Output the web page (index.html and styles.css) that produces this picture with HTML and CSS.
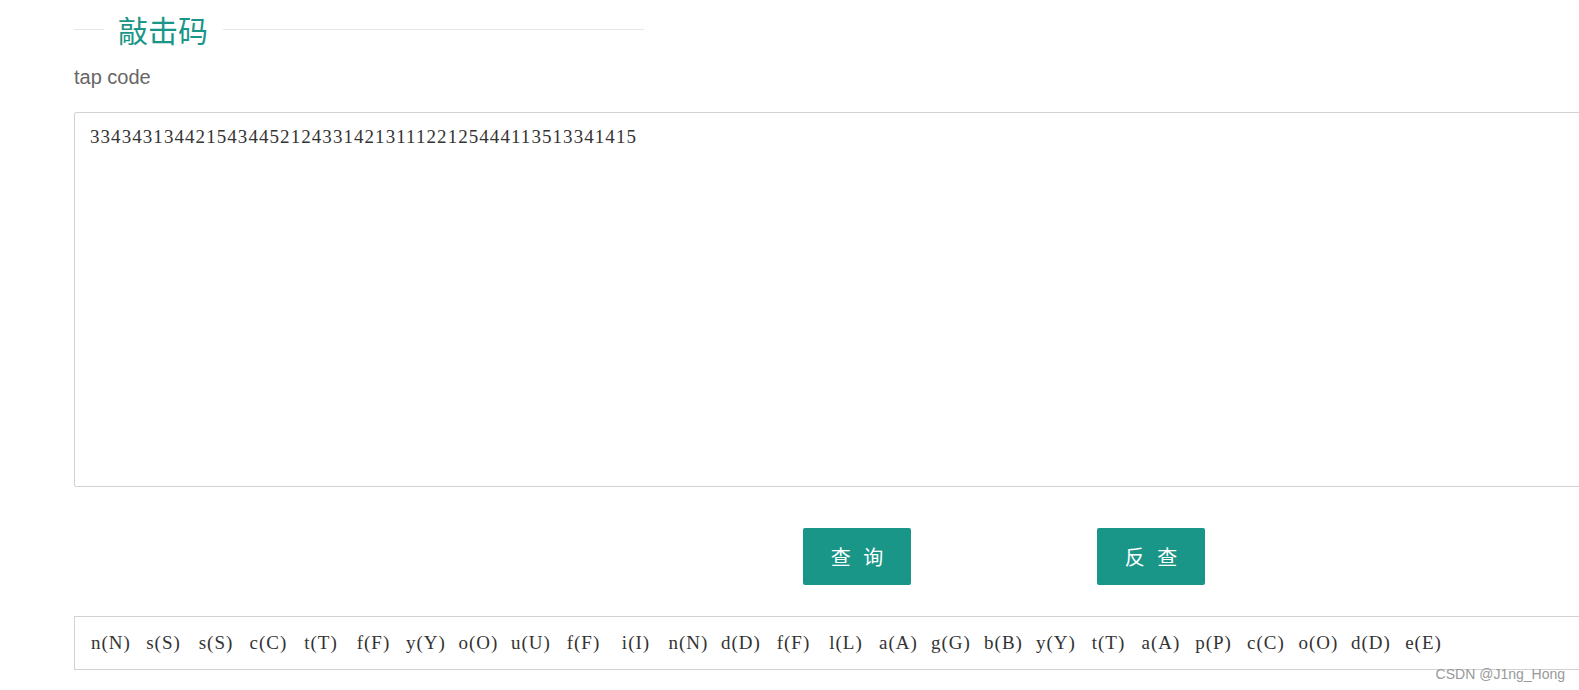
FILE: index.html
```html
<!DOCTYPE html>
<html lang="zh-CN">
<head>
<meta charset="utf-8">
<title>敲击码</title>
<link rel="stylesheet" href="styles.css">
</head>
<body>
<div class="page">
  <div class="title">
    <span class="line line-left"></span>
    <h2 class="title-text">敲击码</h2>
    <span class="line line-right"></span>
  </div>
  <p class="subtitle">tap code</p>
  <textarea class="input" readonly>3343431344215434452124331421311122125444113513341415</textarea>
  <div class="actions">
    <button class="btn">查 询</button>
    <button class="btn btn-second">反 查</button>
  </div>
  <div class="result"><span>n(N)</span> <span>s(S)</span> <span>s(S)</span> <span>c(C)</span> <span>t(T)</span> <span>f(F)</span> <span>y(Y)</span> <span>o(O)</span> <span>u(U)</span> <span>f(F)</span> <span>i(I)</span> <span>n(N)</span> <span>d(D)</span> <span>f(F)</span> <span>l(L)</span> <span>a(A)</span> <span>g(G)</span> <span>b(B)</span> <span>y(Y)</span> <span>t(T)</span> <span>a(A)</span> <span>p(P)</span> <span>c(C)</span> <span>o(O)</span> <span>d(D)</span> <span>e(E)</span></div>
</div>
<div class="watermark">CSDN @J1ng_Hong</div>
</body>
</html>
```
FILE: styles.css
```css
html, body {
  margin: 0;
  padding: 0;
  background: #fff;
  overflow: hidden;
}
body {
  width: 1579px;
  height: 690px;
  position: relative;
}
.page {
  padding: 14px 0 0 74px;
  width: 1560px;
}
.title {
  display: flex;
  align-items: center;
  width: 570px;
  height: 30px;
}
.line {
  height: 1px;
  background: #e6e6e6;
}
.line-left {
  width: 30px;
  flex: none;
}
.line-right {
  flex: 1;
}
.title-text {
  margin: 0 15px 0 14px;
  font-family: "Noto Sans CJK SC", sans-serif;
  font-weight: normal;
  font-size: 30px;
  line-height: 30px;
  color: #1a9688;
}
.subtitle {
  margin: 21px 0 0 0;
  font-family: "Liberation Sans", Arial, sans-serif;
  font-size: 20px;
  line-height: 24px;
  color: #666;
}
.input {
  display: block;
  box-sizing: border-box;
  margin: 23px 0 0 0;
  width: 1540px;
  height: 375px;
  padding: 12px 15px;
  border: 1px solid #d2d2d2;
  border-radius: 2px;
  resize: none;
  outline: none;
  font-family: "Liberation Serif", "Times New Roman", serif;
  font-size: 19px;
  letter-spacing: 1.06px;
  line-height: 24px;
  color: #333;
  background: #fff;
}
.actions {
  display: flex;
  margin-top: 41px;
  padding-left: 729px;
  gap: 186px;
}
.btn {
  width: 108px;
  height: 57px;
  padding: 0;
  border: none;
  border-radius: 2px;
  background: #1a9688;
  color: #fff;
  font-family: "Noto Sans CJK SC", sans-serif;
  font-size: 20px;
  letter-spacing: 4px;
  text-indent: 4px;
}
.result {
  display: flex;
  align-items: center;
  box-sizing: border-box;
  margin-top: 31px;
  width: 1540px;
  height: 54px;
  padding: 0 15px;
  border: 1px solid #d2d2d2;
  font-family: "Liberation Serif", "Times New Roman", serif;
  font-size: 19px;
  letter-spacing: 1px;
  color: #333;
  white-space: nowrap;
}
.result span {
  flex: none;
  width: 42px;
  margin-right: 10.5px;
  text-align: center;
}
.watermark {
  position: absolute;
  right: 14px;
  bottom: 8px;
  font-family: "Liberation Sans", Arial, sans-serif;
  font-size: 14px;
  line-height: 16px;
  color: #999;
}
```
